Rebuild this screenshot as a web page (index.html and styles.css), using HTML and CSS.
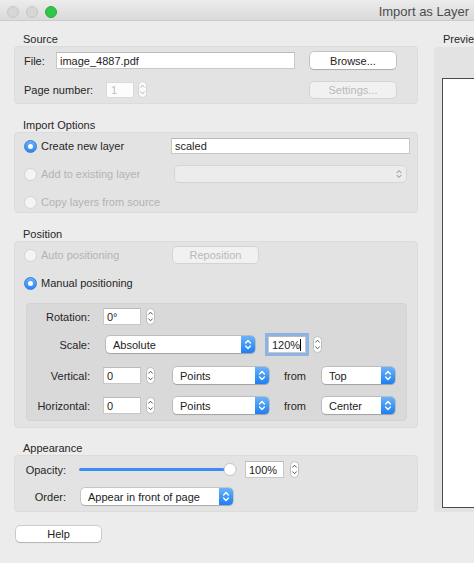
FILE: index.html
```html
<!DOCTYPE html>
<html>
<head>
<meta charset="utf-8">
<title>Import as Layer</title>
<link rel="stylesheet" href="styles.css">
</head>
<body>
<div class="titlebar">
  <div class="lights"><span class="light"></span><span class="light"></span><span class="light green"></span></div>
  <div class="title">Import as Layer</div>
</div>
<div class="content">
  <div class="left">
    <div class="section-label first">Source</div>
    <div class="group g-source">
      <div class="row r17">
        <span class="lbl w-file">File:</span>
        <div class="field f-file">image_4887.pdf</div>
        <div class="button b-wide">Browse...</div>
      </div>
      <div class="row r17 gap12">
        <span class="lbl w-page">Page number:</span>
        <div class="field disabled f-page">1</div>
        <svg class="stepper s-page" width="9" height="17" viewBox="0 0 9 17"><rect x="0.5" y="0.5" width="8" height="16" rx="4" fill="#fafafa" stroke="#d4d4d4"/><path d="M2.6 6.2 4.5 4.2 6.4 6.2M2.6 10.8 4.5 12.8 6.4 10.8" fill="none" stroke="#b4b4b4" stroke-width="1" stroke-linecap="round" stroke-linejoin="round"/></svg>
        <div class="button disabled b-wide">Settings...</div>
      </div>
    </div>

    <div class="section-label">Import Options</div>
    <div class="group g-import">
      <div class="row r16">
        <div class="opt o-create"><span class="radio on"></span><span>Create new layer</span></div>
        <div class="field f-scaled">scaled</div>
      </div>
      <div class="row r16 gap12 dim">
        <div class="opt o-add"><span class="radio"></span><span>Add to existing layer</span></div>
        <div class="popup disabled p-add"><span class="ptext"></span><span class="parrow"><svg width="14" height="16" viewBox="0 0 14 16"><path d="M5 6.6 7 4.6 9 6.6M5 9.4 7 11.4 9 9.4" fill="none" stroke="#a9a9a9" stroke-width="1.1" stroke-linecap="round" stroke-linejoin="round"/></svg></span></div>
      </div>
      <div class="row r16 gap12 dim">
        <div class="opt"><span class="radio"></span><span>Copy layers from source</span></div>
      </div>
    </div>

    <div class="section-label">Position</div>
    <div class="group g-position">
      <div class="row r16 dim">
        <div class="opt o-auto"><span class="radio"></span><span>Auto positioning</span></div>
        <div class="button disabled b-repos">Reposition</div>
      </div>
      <div class="row r16 gap12">
        <div class="opt"><span class="radio on"></span><span>Manual positioning</span></div>
      </div>
      <div class="inner">
        <div class="irow ir-rot">
          <span class="ilbl">Rotation:</span>
          <div class="field f-num">0°</div>
          <svg class="stepper" width="9" height="17" viewBox="0 0 9 17"><rect x="0.5" y="0.5" width="8" height="16" rx="4" fill="#fff" stroke="#bdbdbd"/><path d="M2.6 6.2 4.5 4.2 6.4 6.2M2.6 10.8 4.5 12.8 6.4 10.8" fill="none" stroke="#555" stroke-width="1" stroke-linecap="round" stroke-linejoin="round"/></svg>
        </div>
        <div class="irow ir-scale">
          <span class="ilbl">Scale:</span>
          <div class="popup p-abs"><span class="ptext">Absolute</span><span class="parrow blue"><svg width="14" height="17" viewBox="0 0 14 17"><path d="M4.6 7 7 4.6 9.4 7M4.6 10 7 12.4 9.4 10" fill="none" stroke="#fff" stroke-width="1.4" stroke-linecap="round" stroke-linejoin="round"/></svg></span></div>
          <div class="field f-num focus">120%<span class="caret"></span></div>
          <svg class="stepper s-scale" width="9" height="17" viewBox="0 0 9 17"><rect x="0.5" y="0.5" width="8" height="16" rx="4" fill="#fff" stroke="#bdbdbd"/><path d="M2.6 6.2 4.5 4.2 6.4 6.2M2.6 10.8 4.5 12.8 6.4 10.8" fill="none" stroke="#555" stroke-width="1" stroke-linecap="round" stroke-linejoin="round"/></svg>
        </div>
        <div class="irow">
          <span class="ilbl">Vertical:</span>
          <div class="field f-num">0</div>
          <svg class="stepper" width="9" height="17" viewBox="0 0 9 17"><rect x="0.5" y="0.5" width="8" height="16" rx="4" fill="#fff" stroke="#bdbdbd"/><path d="M2.6 6.2 4.5 4.2 6.4 6.2M2.6 10.8 4.5 12.8 6.4 10.8" fill="none" stroke="#555" stroke-width="1" stroke-linecap="round" stroke-linejoin="round"/></svg>
          <div class="popup p-unit"><span class="ptext">Points</span><span class="parrow blue"><svg width="14" height="17" viewBox="0 0 14 17"><path d="M4.6 7 7 4.6 9.4 7M4.6 10 7 12.4 9.4 10" fill="none" stroke="#fff" stroke-width="1.4" stroke-linecap="round" stroke-linejoin="round"/></svg></span></div>
          <span class="from">from</span>
          <div class="popup p-from"><span class="ptext">Top</span><span class="parrow blue"><svg width="14" height="17" viewBox="0 0 14 17"><path d="M4.6 7 7 4.6 9.4 7M4.6 10 7 12.4 9.4 10" fill="none" stroke="#fff" stroke-width="1.4" stroke-linecap="round" stroke-linejoin="round"/></svg></span></div>
        </div>
        <div class="irow">
          <span class="ilbl">Horizontal:</span>
          <div class="field f-num">0</div>
          <svg class="stepper" width="9" height="17" viewBox="0 0 9 17"><rect x="0.5" y="0.5" width="8" height="16" rx="4" fill="#fff" stroke="#bdbdbd"/><path d="M2.6 6.2 4.5 4.2 6.4 6.2M2.6 10.8 4.5 12.8 6.4 10.8" fill="none" stroke="#555" stroke-width="1" stroke-linecap="round" stroke-linejoin="round"/></svg>
          <div class="popup p-unit"><span class="ptext">Points</span><span class="parrow blue"><svg width="14" height="17" viewBox="0 0 14 17"><path d="M4.6 7 7 4.6 9.4 7M4.6 10 7 12.4 9.4 10" fill="none" stroke="#fff" stroke-width="1.4" stroke-linecap="round" stroke-linejoin="round"/></svg></span></div>
          <span class="from">from</span>
          <div class="popup p-from"><span class="ptext">Center</span><span class="parrow blue"><svg width="14" height="17" viewBox="0 0 14 17"><path d="M4.6 7 7 4.6 9.4 7M4.6 10 7 12.4 9.4 10" fill="none" stroke="#fff" stroke-width="1.4" stroke-linecap="round" stroke-linejoin="round"/></svg></span></div>
        </div>
      </div>
    </div>

    <div class="section-label last">Appearance</div>
    <div class="group g-appear">
      <div class="row r17">
        <span class="alb">Opacity:</span>
        <svg class="slider" width="158" height="17" viewBox="0 0 158 17"><line x1="1.5" y1="8.5" x2="150" y2="8.5" stroke="#3b8df3" stroke-width="3" stroke-linecap="round"/><circle cx="151" cy="8.5" r="6.5" fill="#000" opacity="0.12"/><circle cx="151" cy="8.5" r="6" fill="#fff" stroke="#c2c2c2" stroke-width="0.8"/></svg>
        <div class="field f-pct">100%</div>
        <svg class="stepper s-pct" width="9" height="17" viewBox="0 0 9 17"><rect x="0.5" y="0.5" width="8" height="16" rx="4" fill="#fff" stroke="#bdbdbd"/><path d="M2.6 6.2 4.5 4.2 6.4 6.2M2.6 10.8 4.5 12.8 6.4 10.8" fill="none" stroke="#555" stroke-width="1" stroke-linecap="round" stroke-linejoin="round"/></svg>
      </div>
      <div class="row r17 gap10">
        <span class="alb">Order:</span>
        <div class="popup p-order"><span class="ptext">Appear in front of page</span><span class="parrow blue"><svg width="14" height="17" viewBox="0 0 14 17"><path d="M4.6 7 7 4.6 9.4 7M4.6 10 7 12.4 9.4 10" fill="none" stroke="#fff" stroke-width="1.4" stroke-linecap="round" stroke-linejoin="round"/></svg></span></div>
      </div>
    </div>

    <div class="button b-help">Help</div>
  </div>

  <div class="right">
    <div class="section-label first">Preview</div>
    <div class="preview-panel">
      <div class="preview-box"></div>
    </div>
  </div>
</div>
</body>
</html>
```

FILE: styles.css
```css
* { box-sizing: border-box; }
html, body { margin: 0; padding: 0; }
body {
  width: 474px;
  height: 563px;
  overflow: hidden;
  background: #ececec;
  font-family: "Liberation Sans", Arial, sans-serif;
  font-size: 11px;
  color: #262626;
}

.titlebar {
  height: 21px;
  padding: 3px 5px 0 7px;
  border-bottom: 1px solid #cbcbcb;
  background: linear-gradient(#ececec, #dadada);
  display: flex;
  align-items: center;
  justify-content: space-between;
}
.lights { display: flex; gap: 7px; }
.light {
  width: 12px;
  height: 12px;
  border-radius: 50%;
  background: #d6d6d6;
  border: 1px solid #c6c6c6;
}
.light.green { background: #30c748; border-color: #27ad3b; }
.title { font-size: 13px; color: #4c4c4c; }

.content { display: flex; }
.left { flex: none; width: 418px; padding-left: 14px; }
.right { flex: none; width: 200px; margin-left: 16px; }

.section-label {
  height: 14px;
  line-height: 14px;
  padding-left: 9px;
  margin-top: 14px;
  color: #262626;
  white-space: nowrap;
}
.section-label.first { margin-top: 11px; }
.section-label.last { margin-top: 13px; }

.group {
  background: #e3e3e3;
  border: 1px solid #dcdcdc;
  border-radius: 4px;
  padding-left: 9px;
}
.g-source { height: 58px; padding-top: 5px; padding-right: 21px; }
.g-import { height: 81px; padding-top: 5px; }
.g-position { height: 187px; padding-top: 5px; }
.g-appear { height: 57px; padding-top: 5px; }

.row { display: flex; align-items: center; }
.r17 { height: 17px; }
.r16 { height: 16px; }
.gap12 { margin-top: 12px; }
.gap10 { margin-top: 10px; }
.dim { color: #b3b3b3; }

.lbl { flex: none; }
.w-file { width: 32px; }
.w-page { width: 82px; }

.field {
  flex: none;
  height: 17px;
  background: #fff;
  border: 1px solid #c8c8c8;
  border-top-color: #b9b9b9;
  padding-left: 3px;
  display: flex;
  align-items: center;
  color: #1e1e1e;
}
.field.disabled { border-color: #dadada; color: #bcbcbc; background: #fcfcfc; }
.f-file { width: 239px; }
.f-page { width: 28px; height: 16px; padding-left: 4px; }
.f-scaled { width: 239px; height: 16px; }
.f-num { width: 38px; }
.f-pct { width: 39px; margin-left: 8px; }
.field.focus {
  margin-left: 13px;
  box-shadow: 0 0 0 3px rgba(80, 146, 232, 0.55);
}
.caret {
  display: inline-block;
  width: 1px;
  height: 12px;
  background: #000;
}

.stepper { flex: none; display: block; margin-left: 5px; }
.s-page { margin-left: 4px; }
.s-scale { margin-left: 7px; }
.s-pct { margin-left: 6px; }

.button {
  flex: none;
  height: 17px;
  display: flex;
  align-items: center;
  justify-content: center;
  background: #fff;
  border-radius: 4px;
  box-shadow: 0 0 0 0.5px rgba(0, 0, 0, 0.28), 0 1px 1px rgba(0, 0, 0, 0.12);
  color: #222;
}
.button.disabled {
  background: #f1f1f1;
  color: #b9b9b9;
  box-shadow: 0 0 0 0.5px rgba(0, 0, 0, 0.14);
}
.b-wide { width: 86px; margin-left: auto; }
.g-source .row:last-child .b-wide { height: 16px; }
.b-repos { width: 85px; height: 16px; }
.b-help { width: 85px; height: 16px; margin: 14px 0 0 2px; }

.opt { flex: none; display: flex; align-items: center; gap: 4px; }
.o-create { width: 147px; }
.o-add { width: 151px; }
.o-auto { width: 149px; }

.radio {
  flex: none;
  width: 13px;
  height: 13px;
  border-radius: 50%;
  background: #f4f4f4;
  border: 1px solid #d3d3d3;
  display: flex;
  align-items: center;
  justify-content: center;
}
.radio.on {
  background: linear-gradient(#68b0f8, #2f86f3);
  border-color: #2f7fe0;
}
.radio.on::after {
  content: "";
  width: 5px;
  height: 5px;
  border-radius: 50%;
  background: #fff;
}

.popup {
  flex: none;
  height: 17px;
  display: flex;
  align-items: center;
  justify-content: space-between;
  background: #fff;
  border-radius: 4px;
  overflow: hidden;
  box-shadow: 0 0 0 0.5px rgba(0, 0, 0, 0.25), 0 1px 1px rgba(0, 0, 0, 0.14);
  color: #222;
}
.popup .ptext { padding-left: 7px; white-space: nowrap; }
.parrow { flex: none; width: 14px; height: 100%; display: flex; align-items: center; justify-content: center; }
.parrow svg { display: block; }
.parrow.blue { background: linear-gradient(#6ab3fa, #1c7ff2); }
.popup.disabled {
  height: 16px;
  background: #ececec;
  box-shadow: 0 0 0 0.5px rgba(0, 0, 0, 0.12);
}
.p-add { width: 231px; }
.p-abs { width: 149px; margin-left: 3px; }
.p-unit { width: 96px; margin-left: 18px; }
.p-from { width: 73px; }
.p-order { width: 152px; margin-left: 15px; }
.from { flex: none; width: 53px; padding-left: 15px; color: #262626; }

.inner {
  margin: 12px 0 0 2px;
  width: 381px;
  height: 118px;
  background: #d9d9d9;
  border: 1px solid #d3d3d3;
  border-radius: 4px;
  padding-top: 4px;
}
.irow {
  display: flex;
  align-items: center;
  height: 17px;
  margin-bottom: 13px;
}
.irow.ir-rot { margin-bottom: 11px; }
.irow.ir-scale { margin-bottom: 14px; }
.ilbl { flex: none; width: 63px; text-align: right; margin-right: 13px; }

.alb { flex: none; width: 42px; text-align: right; }
.slider { flex: none; display: block; margin-left: 13px; }

.preview-panel {
  margin-top: 1px;
  height: 465px;
  background: #e3e3e3;
  border-radius: 4px;
  padding: 31px 0 0 8px;
}
.preview-box {
  height: 430px;
  background: #fff;
  border: 1px solid #4a4a4a;
}
```
